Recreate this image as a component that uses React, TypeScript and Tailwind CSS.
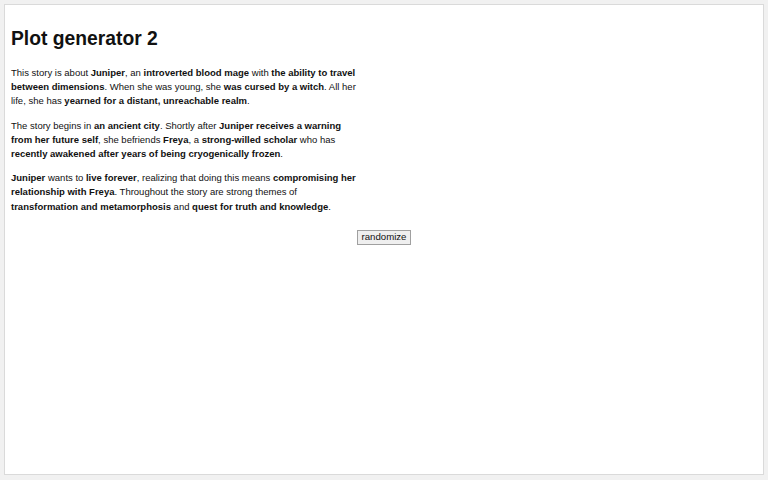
import React from "react";

const B = ({ children }: { children: React.ReactNode }) => <b className="font-bold">{children}</b>;

export default function App() {
  return (
    <div className="h-[480px] w-[768px] bg-[#f1f1f1] p-[4px] font-['Liberation_Sans',Arial,sans-serif] text-[#111]">
      <div className="h-[471px] border border-[#dadada] bg-white px-[6px] pt-[22px]">
        <h1 className="text-[19.3px] font-bold leading-[24px] text-[#111]">Plot generator 2</h1>
        <div className="mt-[15px] w-[350px] text-[9.5px] leading-[14.2px]">
          <p>
            This story is about <B>Juniper</B>, an <B>introverted blood mage</B> with <B>the ability to travel between dimensions</B>. When she was young, she <B>was cursed by a witch</B>. All her life, she has <B>yearned for a distant, unreachable realm</B>.
          </p>
          <p className="mt-[10px]">
            The story begins in <B>an ancient city</B>. Shortly after <B>Juniper receives a warning from her future self</B>, she befriends <B>Freya</B>, a <B>strong-willed scholar</B> who has <B>recently awakened after years of being cryogenically frozen</B>.
          </p>
          <p className="mt-[10px]">
            <B>Juniper</B> wants to <B>live forever</B>, realizing that doing this means <B>compromising her relationship with Freya</B>. Throughout the story are strong themes of <B>transformation and metamorphosis</B> and <B>quest for truth and knowledge</B>.
          </p>
        </div>
        <div className="mt-[16px] flex justify-center">
          <button className="h-[15px] border border-[#a0a0a0] bg-[#efefef] px-[4px] text-[9.65px] leading-[12px] text-[#111]">
            randomize
          </button>
        </div>
      </div>
    </div>
  );
}
